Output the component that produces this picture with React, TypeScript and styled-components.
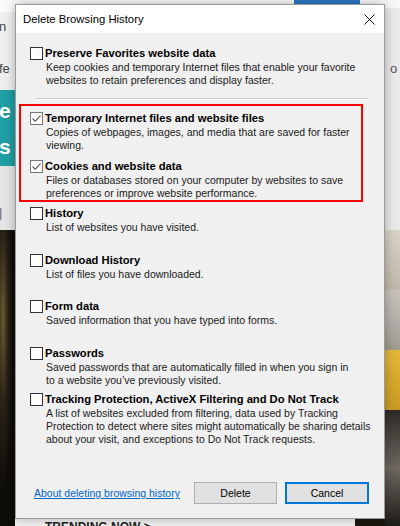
import styled, { createGlobalStyle } from 'styled-components';

const GlobalStyle = createGlobalStyle`
  html, body {
    margin: 0;
    padding: 0;
  }
  body {
    font-family: 'Liberation Sans', Arial, sans-serif;
  }
`;

interface IOption {
  label: string;
  desc: string;
  checked?: boolean;
}

const preserve: IOption = {
  label: 'Preserve Favorites website data',
  desc: 'Keep cookies and temporary Internet files that enable your favorite\nwebsites to retain preferences and display faster.',
};

const highlighted: IOption[] = [
  {
    label: 'Temporary Internet files and website files',
    desc: 'Copies of webpages, images, and media that are saved for faster\nviewing.',
    checked: true,
  },
  {
    label: 'Cookies and website data',
    desc: 'Files or databases stored on your computer by websites to save\npreferences or improve website performance.',
    checked: true,
  },
];

const rest: IOption[] = [
  { label: 'History', desc: 'List of websites you have visited.' },
  { label: 'Download History', desc: 'List of files you have downloaded.' },
  { label: 'Form data', desc: 'Saved information that you have typed into forms.' },
  {
    label: 'Passwords',
    desc: 'Saved passwords that are automatically filled in when you sign in\nto a website you\u2019ve previously visited.',
  },
  {
    label: 'Tracking Protection, ActiveX Filtering and Do Not Track',
    desc: 'A list of websites excluded from filtering, data used by Tracking\nProtection to detect where sites might automatically be sharing details\nabout your visit, and exceptions to Do Not Track requests.',
  },
];

const CheckBox = ({ checked }: { checked?: boolean }) => (
  <Box $checked={checked}>
    {checked && (
      <svg width="11" height="11" viewBox="0 0 11 11">
        <path d="M1.5 5.5 L4.2 8.2 L9.6 2.6" fill="none" stroke="#5a5a5a" strokeWidth="1.1" />
      </svg>
    )}
  </Box>
);

const Option = ({ item, slot }: { item: IOption; slot?: number }) => (
  <Item $slot={slot}>
    <ItemHead>
      <CheckBox checked={item.checked} />
      <ItemLabel>{item.label}</ItemLabel>
    </ItemHead>
    <ItemDesc>{item.desc}</ItemDesc>
  </Item>
);

const App = () => {
  return (
    <>
      <GlobalStyle />
      <Scene>
        {/* 뒤쪽 브라우저 화면 */}
        <SideStrip>
          <Patch $h={12} $bg="#fafafa" />
          <Patch $h={78} $bg="#efefef">
            <PeekText $top={8} $color="#444">n</PeekText>
            <PeekText $top={50} $color="#444">fe</PeekText>
          </Patch>
          <Patch $h={76} $bg="#1f9ea4">
            <PeekText $top={10} $color="#fff" $size={21} $bold>e</PeekText>
            <PeekText $top={46} $color="#fff" $size={21} $bold>s</PeekText>
          </Patch>
          <Patch $h={64} $bg="#e4e4e4">
            <PeekText $top={40} $color="#666">|</PeekText>
          </Patch>
          <Patch
            $grow
            $bg="radial-gradient(ellipse at 20% 30%, #6b5a33 0%, #2a2216 30%, #0e0c08 60%), #0e0c08"
          />
        </SideStrip>

        <MiddleColumn>
          <TopTabs>
            <TabSpacer />
            <BlueTab />
          </TopTabs>
          <BottomRow>
            <Trending>TRENDING NOW &gt;</Trending>
            <DarkCorner />
          </BottomRow>
        </MiddleColumn>

        <SideStrip>
          <Patch $h={8} $bg="#f7f7f7" />
          <Patch $h={222} $bg="#e9e9e9">
            <PeekText $top={54} $left={5} $color="#555">o</PeekText>
          </Patch>
          <Patch $h={60} $bg="linear-gradient(#d9d2c6, #bfb6a8)" />
          <Patch $h={60} $bg="linear-gradient(#c8c4bc, #9f9a90)" />
          <Patch $h={60} $bg="linear-gradient(#e2b83a, #c99a22)" />
          <Patch $grow $bg="linear-gradient(#2c2a26, #6d675e 50%, #1e1c18)" />
        </SideStrip>

        {/* 대화상자 */}
        <Dialog>
          <TitleBar>
            <Title>Delete Browsing History</Title>
            <CloseButton>
              <svg width="11" height="11" viewBox="0 0 11 11">
                <path d="M0.5 0.5 L10.5 10.5 M10.5 0.5 L0.5 10.5" stroke="#111" strokeWidth="1" />
              </svg>
            </CloseButton>
          </TitleBar>

          <Body>
            <Option item={preserve} />
            <Separator />
            <Highlight>
              <Option item={highlighted[0]} slot={48} />
              <Option item={highlighted[1]} />
            </Highlight>
            <List>
              {rest.map((item, i) => (
                <Option key={item.label} item={item} slot={i < rest.length - 1 ? 46.6 : undefined} />
              ))}
            </List>
          </Body>

          <Footer>
            <HelpLink href="#">About deleting browsing history</HelpLink>
            <Actions>
              <DialogButton>Delete</DialogButton>
              <DialogButton $primary>Cancel</DialogButton>
            </Actions>
          </Footer>
        </Dialog>
      </Scene>
    </>
  );
};

const Scene = styled.div`
  position: relative;
  width: 400px;
  height: 526px;
  overflow: hidden;
  display: grid;
  grid-template-columns: 15px 1fr 15px;
  background: #f0f0f0;
`;

const SideStrip = styled.div`
  display: flex;
  flex-direction: column;
  min-height: 0;
`;

const Patch = styled.div<{ $h?: number; $bg: string; $grow?: boolean }>`
  position: relative;
  flex: ${({ $grow }) => ($grow ? '1' : 'none')};
  height: ${({ $h }) => ($h ? `${$h}px` : 'auto')};
  background: ${({ $bg }) => $bg};
  overflow: hidden;
`;

const PeekText = styled.span<{ $top: number; $left?: number; $color: string; $size?: number; $bold?: boolean }>`
  position: absolute;
  top: ${({ $top }) => $top}px;
  left: ${({ $left }) => $left ?? -1}px;
  color: ${({ $color }) => $color};
  font-size: ${({ $size }) => $size ?? 13}px;
  font-weight: ${({ $bold }) => ($bold ? 700 : 400)};
  line-height: 1;
`;

const MiddleColumn = styled.div`
  display: flex;
  flex-direction: column;
  justify-content: space-between;
  background: #f4f4f4;
`;

const TopTabs = styled.div`
  display: flex;
  height: 4px;
  background: #fafafa;
`;

const TabSpacer = styled.div`
  flex: 1;
`;

const BlueTab = styled.div`
  width: 66px;
  margin-right: 25px;
  background: #2a78c2;
`;

const BottomRow = styled.div`
  display: flex;
  height: 7px;
`;

const Trending = styled.div`
  flex: 1;
  padding: 2px 0 0 30px;
  font-size: 12px;
  font-weight: 700;
  line-height: 12px;
  color: #222;
  background: #f3f3f3;
  overflow: hidden;
  white-space: nowrap;
`;

const DarkCorner = styled.div`
  width: 30px;
  background: #1b1710;
`;

const Dialog = styled.div`
  position: absolute;
  left: 15px;
  top: 4px;
  width: 370px;
  height: 515px;
  box-sizing: border-box;
  border: 1px solid #9b9b9b;
  background: #f0f0f0;
  box-shadow: 0 0 10px rgba(0, 0, 0, 0.3);
  display: flex;
  flex-direction: column;
  font-family: 'Liberation Sans', Arial, sans-serif;
  font-size: 10.5px;
  color: #1a1a1a;
`;

const TitleBar = styled.div`
  flex: none;
  height: 28px;
  display: flex;
  align-items: center;
  justify-content: space-between;
  padding-left: 7px;
  background: #fff;
`;

const Title = styled.div`
  font-size: 11.3px;
  color: #000;
`;

const CloseButton = styled.div`
  width: 30px;
  height: 28px;
  display: flex;
  align-items: center;
  justify-content: center;
`;

const Body = styled.div`
  padding: 14px 15px 0 14px;
  display: flex;
  flex-direction: column;
`;

const Item = styled.div<{ $slot?: number }>`
  flex: none;
  height: ${({ $slot }) => ($slot ? `${$slot}px` : 'auto')};
`;

const ItemHead = styled.div`
  display: flex;
  align-items: center;
  gap: 2px;
  height: 13px;
`;

const Box = styled.span<{ $checked?: boolean }>`
  box-sizing: border-box;
  width: 13px;
  height: 13px;
  display: flex;
  align-items: center;
  justify-content: center;
  border: 1px solid ${({ $checked }) => ($checked ? '#777' : '#333')};
  background: #fff;
`;

const ItemLabel = styled.span`
  font-size: 11.2px;
  font-weight: 700;
  line-height: 13px;
  color: #000;
  white-space: nowrap;
`;

const ItemDesc = styled.div`
  margin-top: 1px;
  padding-left: 16px;
  line-height: 13px;
  white-space: pre;
`;

const Separator = styled.div`
  height: 1px;
  margin: 11px 1px 5px 5px;
  background: #cdcdcd;
  box-shadow: 0 1px 0 #fafafa;
`;

const Highlight = styled.div`
  margin: 0 6px 5px -11px;
  padding: 6px 0 0 9px;
  border: 2px solid #ff0000;
`;

const List = styled.div`
  display: flex;
  flex-direction: column;
`;

const Footer = styled.div`
  margin-top: auto;
  display: flex;
  align-items: center;
  padding: 0 15px 14px 18px;
`;

const HelpLink = styled.a`
  color: #0066cc;
  text-decoration: underline;
  font-size: 10.5px;
`;

const Actions = styled.div`
  margin-left: auto;
  display: flex;
  gap: 8px;
`;

const DialogButton = styled.button<{ $primary?: boolean }>`
  box-sizing: border-box;
  width: ${({ $primary }) => ($primary ? 84 : 83)}px;
  height: 22px;
  padding: 0;
  font-family: 'Liberation Sans', Arial, sans-serif;
  font-size: 10.5px;
  color: #000;
  background: #e1e1e1;
  border: ${({ $primary }) => ($primary ? '2px solid #0078d7' : '1px solid #adadad')};
`;

export default App;
